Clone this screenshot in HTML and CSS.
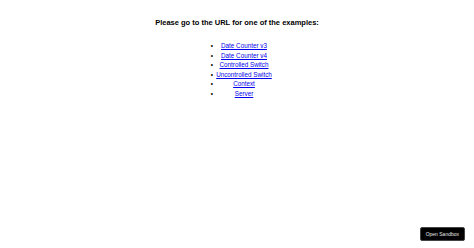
FILE: index.html
```html
<!DOCTYPE html>
<html>
<head>
<meta charset="utf-8">
<link rel="stylesheet" href="styles.css">
</head>
<body>
<main class="page">
  <h1 class="title">Please go to the URL for one of the examples:</h1>
  <ul class="links">
    <li><a href="#">Date Counter v3</a></li>
    <li><a href="#">Date Counter v4</a></li>
    <li><a href="#">Controlled Switch</a></li>
    <li><a href="#">Uncontrolled Switch</a></li>
    <li><a href="#">Context</a></li>
    <li><a href="#">Server</a></li>
  </ul>
</main>
<a class="sandbox" href="#">Open Sandbox</a>
</body>
</html>
```
FILE: styles.css
```css
html, body {
  margin: 0;
  padding: 0;
  background: #fff;
}
body {
  font-family: "Liberation Sans", Arial, sans-serif;
  width: 474px;
  height: 248px;
  overflow: hidden;
  position: relative;
}
.page {
  display: flex;
  flex-direction: column;
  align-items: center;
  padding-top: 18px;
}
.title {
  margin: 0;
  font-size: 7.5px;
  font-weight: bold;
  color: #000;
  line-height: 10px;
}
.links {
  margin: 13px 0 0 0;
  padding-left: 14px;
  text-align: center;
  font-size: 6.3px;
  line-height: 9.6px;
  color: #000;
}
.links li::marker {
  content: "\2022\2005\2005";
  font-size: 6.3px;
  color: #000;
}
.links a {
  color: #0000ee;
}
.sandbox {
  position: absolute;
  right: 9px;
  bottom: 7px;
  background: #000;
  color: #e8e8e8;
  font-size: 5px;
  line-height: 6px;
  text-decoration: none;
  padding: 3px 5px;
  border-radius: 2px;
  border: 1px solid #444;
}
```
